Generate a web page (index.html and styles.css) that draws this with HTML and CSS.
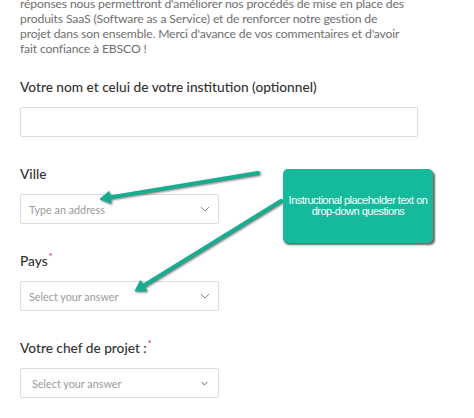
FILE: index.html
```html
<!DOCTYPE html>
<html lang="fr">
<head>
<meta charset="utf-8">
<link rel="stylesheet" href="styles.css">
</head>
<body>
<div class="page">
  <form class="form">
    <p class="intro">réponses nous permettront d'améliorer nos procédés de mise en place des<br>produits SaaS (Software as a Service) et de renforcer notre gestion de<br>projet dans son ensemble. Merci d'avance de vos commentaires et d'avoir<br>fait confiance à EBSCO !</p>

    <div class="field">
      <label class="label">Votre nom et celui de votre institution (optionnel)</label>
      <div class="input"></div>
    </div>

    <div class="field">
      <label class="label">Ville</label>
      <div class="select"><span class="ph">Type an address</span><svg class="chev" viewBox="0 0 10 6"><path d="M1 1 L5 5 L9 1"/></svg></div>
    </div>

    <div class="field">
      <label class="label">Pays<sup class="req">*</sup></label>
      <div class="select"><span class="ph">Select your answer</span><svg class="chev" viewBox="0 0 10 6"><path d="M1 1 L5 5 L9 1"/></svg></div>
    </div>

    <div class="field">
      <label class="label">Votre chef de projet :<sup class="req">*</sup></label>
      <div class="select select-alt"><span class="ph">Select your answer</span><svg class="chev chev-sm" viewBox="0 0 10 6"><path d="M1 1 L5 5 L9 1"/></svg></div>
    </div>
  </form>

  <svg class="arrows" width="474" height="418" viewBox="0 0 474 418">
    <g class="arrow">
      <line x1="258" y1="173" x2="109.9" y2="197.4"/>
      <polygon points="100,199 110.9,203.3 108.9,191.5"/>
    </g>
    <g class="arrow">
      <line x1="281" y1="201" x2="143.5" y2="285.8"/>
      <polygon points="135,291 146.7,290.9 140.4,280.6"/>
    </g>
  </svg>

  <div class="callout">Instructional placeholder text on<br>drop-down questions</div>
</div>
</body>
</html>
```

FILE: styles.css
```css
html, body {
  margin: 0;
  padding: 0;
  background: #ffffff;
}

.page {
  position: relative;
  width: 474px;
  height: 418px;
  overflow: hidden;
}

.form {
  display: flex;
  flex-direction: column;
  gap: 28px;
  padding-left: 20px;
  width: 398px;
  font-family: Lato, "Open Sans", sans-serif;
}

.intro {
  margin: -4px 0 -6px 0;
  font-size: 12.2px;
  line-height: 15px;
  letter-spacing: -0.15px;
  color: #6f6f6f;
  white-space: nowrap;
}

.field {
  display: flex;
  flex-direction: column;
  gap: 11px;
}

.label {
  font-size: 13.7px;
  line-height: 18px;
  font-weight: 500;
  color: #333333;
}

.req {
  color: #d0103a;
  font-size: 9px;
  vertical-align: top;
  line-height: 10px;
  margin-left: 1px;
}

.input {
  height: 28px;
  border: 1px solid #dcdcdc;
  border-radius: 2px;
  background: #fff;
}

.select {
  height: 28px;
  border: 1px solid #dedede;
  border-radius: 2px;
  display: flex;
  align-items: center;
  justify-content: space-between;
  padding: 0 8px 0 8px;
  box-sizing: content-box;
  width: 181px;
}

.select-alt {
  padding: 0 10px 0 11px;
  width: 176px;
}

.ph {
  font-size: 10.8px;
  color: #9a9a9a;
}

.chev {
  width: 10px;
  height: 6px;
  fill: none;
  stroke: #8a8a8a;
  stroke-width: 1;
}

.chev-sm {
  width: 7px;
  height: 5px;
  stroke: #555;
  stroke-width: 1.4;
}

.arrows {
  position: absolute;
  top: 0;
  left: 0;
  pointer-events: none;
}

.arrow {
  filter: drop-shadow(1.5px 1.5px 1px rgba(0, 0, 0, 0.55));
}

.arrow line {
  stroke: #17ad91;
  stroke-width: 4;
  stroke-linecap: round;
}

.arrow polygon {
  fill: #17ad91;
  stroke: #17ad91;
  stroke-width: 1;
  stroke-linejoin: round;
}

.callout {
  position: absolute;
  left: 283px;
  top: 169px;
  width: 150px;
  height: 74px;
  box-sizing: border-box;
  background: #15b99b;
  border-radius: 5px;
  box-shadow: 1.5px 2px 2px rgba(0, 0, 0, 0.6);
  display: flex;
  align-items: center;
  justify-content: center;
  text-align: center;
  color: #ffffff;
  font-family: "Liberation Sans", Arial, sans-serif;
  font-size: 11px;
  line-height: 11px;
  letter-spacing: -0.5px;
  white-space: nowrap;
}
```
